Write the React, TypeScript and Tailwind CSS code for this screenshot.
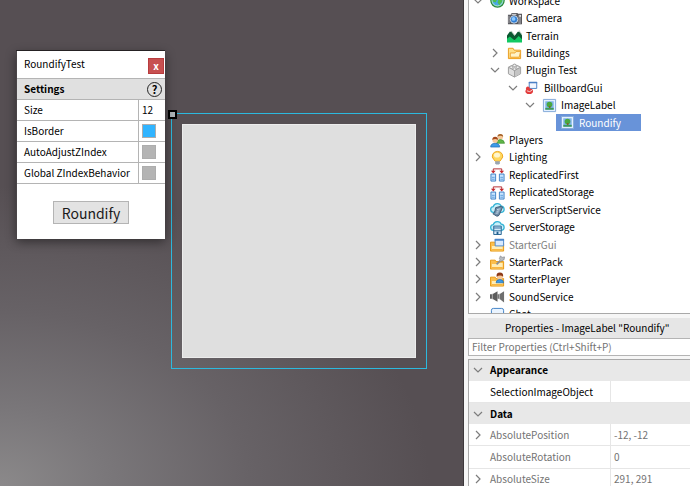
import type { ReactNode } from 'react'

type IconName =
  | 'workspace'
  | 'camera'
  | 'terrain'
  | 'folder'
  | 'model'
  | 'billboard'
  | 'image'
  | 'players'
  | 'lighting'
  | 'replicated'
  | 'serverScript'
  | 'serverStorage'
  | 'starterGui'
  | 'starterPack'
  | 'starterPlayer'
  | 'sound'
  | 'chat'

interface TreeItem {
  name: string
  icon: IconName
  level: number
  state?: 'open' | 'closed'
  dim?: boolean
  selected?: boolean
}

const tree: TreeItem[] = [
  { name: 'Workspace', icon: 'workspace', level: 0, state: 'open' },
  { name: 'Camera', icon: 'camera', level: 1 },
  { name: 'Terrain', icon: 'terrain', level: 1 },
  { name: 'Buildings', icon: 'folder', level: 1, state: 'closed' },
  { name: 'Plugin Test', icon: 'model', level: 1, state: 'open' },
  { name: 'BillboardGui', icon: 'billboard', level: 2, state: 'open' },
  { name: 'ImageLabel', icon: 'image', level: 3, state: 'open' },
  { name: 'Roundify', icon: 'image', level: 4, selected: true },
  { name: 'Players', icon: 'players', level: 0 },
  { name: 'Lighting', icon: 'lighting', level: 0, state: 'closed' },
  { name: 'ReplicatedFirst', icon: 'replicated', level: 0 },
  { name: 'ReplicatedStorage', icon: 'replicated', level: 0 },
  { name: 'ServerScriptService', icon: 'serverScript', level: 0 },
  { name: 'ServerStorage', icon: 'serverStorage', level: 0 },
  { name: 'StarterGui', icon: 'starterGui', level: 0, state: 'closed', dim: true },
  { name: 'StarterPack', icon: 'starterPack', level: 0, state: 'closed' },
  { name: 'StarterPlayer', icon: 'starterPlayer', level: 0, state: 'closed' },
  { name: 'SoundService', icon: 'sound', level: 0, state: 'closed' },
  { name: 'Chat', icon: 'chat', level: 0 },
]

const indent = ['pl-px', 'pl-[18px]', 'pl-9', 'pl-[53px]', 'pl-[71px]']

const folderShape = (
  <>
    <path d="M.5 5.500h5l1 1.500h8V15H.5z" fill="#fbbf4d" stroke="#e8980f" />
    <path d="M2 9.500h5l1-1h5.500V14H2z" fill="#ffedb5" />
    <path d="M2 13.500h11.500" stroke="#f7a823" />
  </>
)

const cloud = (
  <path
    d="M4 11a3 3 0 0 1-.5-6A4.5 4.5 0 0 1 12 4.500a3.300 3.300 0 0 1 .5 6.500z"
    fill="#c9f0fa"
    stroke="#35b4d6"
    strokeWidth="1.4"
  />
)

const icons: Record<IconName, ReactNode> = {
  workspace: (
    <>
      <circle cx="8" cy="8" r="7" fill="#4aa8e8" stroke="#2d8a3c" strokeWidth="1.5" />
      <circle cx="8" cy="8" r="5.800" fill="none" stroke="#b9efb9" />
      <path d="M3 5l4-2 1 3-2 4-3-1zM9 7l4-2v4l-3 4-2-3z" fill="#4fc04f" />
      <path d="M6 3l3-1 1 2-3 2z" fill="#d8f3ff" />
    </>
  ),
  camera: (
    <>
      <path d="M1 4h3l1-2h6l1 1h4v11H1z" fill="#55555a" />
      <path d="M12 4h3v10h-3z" fill="#85858a" />
      <path d="M1 5h2v8H1z" fill="#85858a" />
      <path d="M5 3h5v1.500H5z" fill="#c5c8cc" />
      <circle cx="7.500" cy="9" r="4" fill="#2f7fd6" stroke="#cfd6e0" />
      <circle cx="7" cy="8.500" r="2" fill="#8cc8ff" />
      <path d="M13 4.500h2V6h-2z" fill="#fff" />
    </>
  ),
  terrain: (
    <>
      <path d="M9 8l4-6 3 4v6H9zM2 4l3-1 4 5-4 2z" fill="#c3d3c9" />
      <path d="M0 8l2.500-3.500 2-.5L8 8.500l3.500-4.500 2 .5L16 8v5H0z" fill="#0a5730" />
      <path d="M0 11.500L3 9l5 4 4.500-4.500L16 12v3.500H0z" fill="#12c862" />
    </>
  ),
  folder: (
    <>
      <path d="M1.500 3.500h5l1 2h7v9h-13z" fill="#ffe08a" stroke="#e79a1e" />
      <path d="M3.500 8.500h5l1-1.500h5l-1.500 6H3.500z" fill="#fff3c9" stroke="#eba431" />
      <path d="M2 14h12" stroke="#f7a823" />
    </>
  ),
  model: (
    <>
      <path d="M8 1.500l6.500 3v7L8 15l-6.500-3.500v-7z" fill="#dedede" stroke="#9a9a9a" />
      <path d="M8 8l6-3.500v7L8 15z" fill="#c4c4c4" />
      <path d="M1.500 4.500L8 8v7M8 8l6.500-3.500" fill="none" stroke="#9f9f9f" />
      <ellipse cx="4.500" cy="4.500" rx="1.700" ry="1.300" fill="#f7f7f7" stroke="#8a8a8a" strokeWidth=".7" />
      <ellipse cx="8" cy="2.500" rx="1.700" ry="1.300" fill="#f7f7f7" stroke="#8a8a8a" strokeWidth=".7" />
      <ellipse cx="11.500" cy="4.500" rx="1.700" ry="1.300" fill="#f7f7f7" stroke="#8a8a8a" strokeWidth=".7" />
      <ellipse cx="8" cy="6.500" rx="1.700" ry="1.300" fill="#f7f7f7" stroke="#8a8a8a" strokeWidth=".7" />
    </>
  ),
  billboard: (
    <>
      <path d="M4.500 2.500h8v6.500h-8z" fill="#f1f6ff" stroke="#4a7fc4" />
      <path d="M4 2h9v1.500H4z" fill="#4a7fc4" />
      <ellipse cx="4.500" cy="12" rx="4" ry="3" fill="#e23b3b" />
      <circle cx="3" cy="9" r="2" fill="#e23b3b" />
      <path d="M2 11.500q3 2 5.500-.5" fill="none" stroke="#fff" strokeWidth=".8" />
    </>
  ),
  image: (
    <>
      <path d="M1.500 1.500h13v13h-13z" fill="#e3f0ff" stroke="#7fa6d8" />
      <path d="M3.500 3.500h9v9h-9z" fill="#7fb4e8" />
      <circle cx="8" cy="7" r="3" fill="#4aa83e" />
      <path d="M7.500 8.500H9v2.500H7.500z" fill="#8a5a2b" />
      <path d="M3.500 10.500h9v2h-9z" fill="#3f9a5a" />
    </>
  ),
  players: (
    <>
      <circle cx="11" cy="4" r="3" fill="#f8c898" />
      <path d="M8 4q0-3 3-3t3 3q-3-2-6 0z" fill="#a3622a" />
      <path d="M7 11q0-4 4-4t4.500 4z" fill="#5fb648" stroke="#3f8f30" strokeWidth=".7" />
      <circle cx="5.500" cy="7.500" r="3" fill="#f8c898" />
      <path d="M2.500 7.500q0-3.500 3-3.500t3 3.500q-3-2-6 0z" fill="#a3491c" />
      <path d="M.7 15q0-4 4.800-4t4.800 4z" fill="#3d9be8" stroke="#1b66ac" strokeWidth=".7" />
    </>
  ),
  lighting: (
    <>
      <path
        d="M8 1.500a5.500 5 0 0 1 4 8.500L10.500 12h-5L4 10A5.500 5 0 0 1 8 1.500z"
        fill="#ffd860"
        stroke="#eda31b"
      />
      <ellipse cx="7.500" cy="5.500" rx="3.200" ry="2.500" fill="#fff6cf" />
      <path d="M5.500 12h5v2l-1 1.500h-3l-1-1.500z" fill="#9aa5b2" />
    </>
  ),
  replicated: (
    <>
      <path d="M3.500 5V2h9v3" fill="none" stroke="#b3262c" />
      <path d="M1 4h5L3.500 7zM10 4h5l-2.500 3z" fill="#c3272d" />
      <path d="M1 7.500h5V15H1zM10 7.500h5V15h-5z" fill="#c9e5ff" stroke="#3c7fc4" />
      <path d="M2 11h3M11 11h3M2 13h3M11 13h3" stroke="#5b9ddc" />
    </>
  ),
  serverScript: (
    <>
      {cloud}
      <path d="M6 6l6-1.500q2 .5 1 2l-3 7q-1 2-3 1.500L3 12.500q2 0 3-6.500z" fill="#6b8aa6" stroke="#3d5a75" />
      <path d="M7.500 8l3.500-.7M7 10l3-.6M6 12l3-.5" stroke="#cfe0ee" />
    </>
  ),
  serverStorage: (
    <>
      {cloud}
      <path d="M4 6.500h8v9H4z" fill="#d3e8f8" stroke="#1f5f8f" />
      <path d="M4 8.500h8M4 11.500h8" stroke="#2b6c9c" />
      <path d="M7 12.500h2v3H7z" fill="#1f5f8f" />
    </>
  ),
  starterGui: (
    <>
      {folderShape}
      <path d="M5.500 2.500h9v7h-9z" fill="#d8eaff" stroke="#4a86cc" />
      <path d="M5 2h10v2H5z" fill="#4a86cc" />
    </>
  ),
  starterPack: (
    <>
      {folderShape}
      <path d="M7 10l4-4" stroke="#8c8f94" strokeWidth="2" />
      <path d="M10 4l1-3 2 1.500L15.500 2 15 5l-3 1.500z" fill="#b8bcc2" stroke="#808389" strokeWidth=".7" />
    </>
  ),
  starterPlayer: (
    <>
      {folderShape}
      <circle cx="10.500" cy="5" r="3.200" fill="#f8c898" />
      <path d="M7 5q-.5-4.500 3.500-4.500T14 5q-3-2.500-7 0z" fill="#8d3a18" />
      <path d="M6.500 11.500q0-3.500 4-3.500t4 3.500z" fill="#3d9be8" stroke="#1b66ac" strokeWidth=".7" />
    </>
  ),
  sound: (
    <>
      <path d="M0 5.500h2.500L8 2.500v11l-5.500-3H0z" fill="#5c5c5c" />
      <path d="M8 5.500h2L15 2.500v12l-5-4H8z" fill="#6f6f6f" />
      <path d="M2.500 5v6M10 5v6" stroke="#b5b5b5" />
    </>
  ),
  chat: <path d="M3.500 1.500h9q2 0 2 2v6q0 2-2 2H8L5 14v-2.500H3.500q-2 0-2-2v-6q0-2 2-2z" fill="#eaf4ff" stroke="#3c7fc4" />,
}

function Icon({ name }: { name: IconName }) {
  return (
    <svg viewBox="0 0 16 16" className="size-[15px] shrink-0" aria-hidden="true">
      {icons[name]}
    </svg>
  )
}

function Chevron({ state }: { state: 'open' | 'closed' }) {
  return (
    <svg viewBox="0 0 10 10" className="size-2.5" fill="none" stroke="#7d7d7d" strokeWidth="1.2" aria-hidden="true">
      <path d={state === 'open' ? 'M1 3l4 4 4-4' : 'M3 1l4 4-4 4'} />
    </svg>
  )
}

function TreeRow({ item }: { item: TreeItem }) {
  return (
    <li className={`flex min-h-0 items-center ${indent[item.level]}`}>
      {item.state ? (
        <button
          type="button"
          aria-label={`Toggle ${item.name}`}
          className="flex w-4 shrink-0 justify-center"
        >
          <Chevron state={item.state} />
        </button>
      ) : (
        <span className="w-4 shrink-0" />
      )}
      <span
        className={`flex h-full items-center gap-1 pl-1 whitespace-nowrap ${
          item.selected ? 'bg-[#6893d9] pr-5 text-white' : ''
        } ${item.dim ? 'text-[#808080]' : ''}`}
      >
        <Icon name={item.icon} />
        {item.name}
      </span>
    </li>
  )
}

function Explorer() {
  return (
    <section aria-label="Explorer" className="h-[314px] shrink-0 overflow-hidden border-b border-l border-[#a9a9a9] bg-white">
      <ul className="-mt-2 grid h-[331px] auto-rows-fr">
        {tree.map((item) => (
          <TreeRow key={item.name} item={item} />
        ))}
      </ul>
    </section>
  )
}

function GroupRow({ name }: { name: string }) {
  return (
    <tr className="bg-[#e8e8e8]">
      <th colSpan={2} scope="colgroup" className="p-0 text-left font-bold">
        <span className="flex items-center">
          <button type="button" aria-label={`Toggle ${name}`} className="flex w-[21px] justify-center pr-1">
            <Chevron state="open" />
          </button>
          {name}
        </span>
      </th>
    </tr>
  )
}

interface PropertyRowProps {
  name: string
  value?: string
  expandable?: boolean
  readOnly?: boolean
}

function PropertyRow({ name, value, expandable, readOnly }: PropertyRowProps) {
  return (
    <tr className={readOnly ? 'text-[#737373]' : ''}>
      <th scope="row" className="border-r border-b border-[#e6e6e6] p-0 text-left font-normal">
        <span className="flex items-center">
          <span className="flex w-[21px] justify-center pr-1">
            {expandable && <Chevron state="closed" />}
          </span>
          {name}
        </span>
      </th>
      <td className="border-b border-[#e6e6e6] p-0 pl-[3px]">{value}</td>
    </tr>
  )
}

function Properties() {
  return (
    <section aria-label="Properties" className="flex min-h-0 flex-1 flex-col overflow-hidden">
      <h2 className="mt-1 h-5 shrink-0 bg-[#e6e6e6] pl-[37px] leading-5 whitespace-nowrap">
        Properties - ImageLabel "Roundify"
      </h2>
      <input
        type="text"
        aria-label="Filter properties"
        placeholder="Filter Properties (Ctrl+Shift+P)"
        className="h-[18px] w-full shrink-0 border border-r-0 border-[#b4b4b4] bg-white pb-0.5 pl-[3px] outline-none placeholder:text-[#737373]"
      />
      <div className="mt-[3px] shrink-0 border-t border-l border-[#a9a9a9] bg-white">
        <table className="h-[131px] w-full table-fixed border-separate border-spacing-0">
          <colgroup>
            <col className="w-[142px]" />
            <col />
          </colgroup>
          <tbody>
            <GroupRow name="Appearance" />
            <PropertyRow name="SelectionImageObject" />
            <GroupRow name="Data" />
            <PropertyRow name="AbsolutePosition" value="-12, -12" expandable readOnly />
            <PropertyRow name="AbsoluteRotation" value="0" readOnly />
            <PropertyRow name="AbsoluteSize" value="291, 291" expandable readOnly />
          </tbody>
        </table>
      </div>
    </section>
  )
}

function SettingToggle({ id, label, checked }: { id: string; label: string; checked?: boolean }) {
  return (
    <div className="flex h-[21px] border-b border-[#b4b4b4]">
      <label htmlFor={id} className="flex-1 pl-[7px] leading-5 whitespace-nowrap">
        {label}
      </label>
      <div className="flex w-[27px] shrink-0 items-center border-l border-[#b4b4b4] pl-[3px]">
        <input
          id={id}
          type="checkbox"
          defaultChecked={checked}
          className="size-3.5 appearance-none border border-[#adadad] bg-[#b4b4b4] checked:bg-[#30b4ff]"
        />
      </div>
    </div>
  )
}

function PluginWindow() {
  return (
    <section
      aria-label="RoundifyTest"
      className="absolute top-[51px] left-4 h-[188px] w-[149px] border-l border-[#4a4548] bg-white shadow-[0_3px_10px_rgba(0,0,0,0.45),0_-1px_0_#2a2628]"
    >
      <header className="flex h-7 items-center justify-between border-b border-[#b4b4b4] pr-px pl-[7px]">
        <h1 className="pb-0.5">RoundifyTest</h1>
        <button
          type="button"
          aria-label="Close"
          className="mt-0.5 size-4 border border-[#b83c3e] bg-[#c75050] leading-3 font-bold text-white"
        >
          x
        </button>
      </header>
      <div className="flex h-[21px] items-center justify-between border-b border-[#b4b4b4] bg-[#e0e0e0] pr-[3px] pl-[7px]">
        <h2 className="leading-5 font-bold">Settings</h2>
        <button
          type="button"
          aria-label="Help"
          className="size-[15px] rounded-full border border-[#222] text-[11px] leading-3 font-bold"
        >
          ?
        </button>
      </div>
      <div className="flex h-[21px] border-b border-[#b4b4b4]">
        <label htmlFor="size" className="flex-1 pl-[7px] leading-5">
          Size
        </label>
        <input
          id="size"
          type="text"
          defaultValue="12"
          className="w-[27px] border-l border-[#b4b4b4] pl-[3px] outline-none"
        />
      </div>
      <SettingToggle id="is-border" label="IsBorder" checked />
      <SettingToggle id="auto-z" label="AutoAdjustZIndex" />
      <SettingToggle id="global-z" label="Global ZIndexBehavior" />
      <div className="flex justify-center pt-[17px]">
        <button
          type="button"
          className="h-[23px] w-[76px] border border-[#b4b4b4] bg-[#e3e3e3] text-sm leading-5 text-[#1a1a1a]"
        >
          Roundify
        </button>
      </div>
    </section>
  )
}

function Viewport() {
  return (
    <main className="relative min-w-0 flex-1 overflow-hidden border-r border-[#3d383b] bg-[#564f53] bg-[radial-gradient(ellipse_430px_300px_at_0%_100%,#8b898a_0%,#7a777a_25%,#676266_58%,#564f53_100%)]">
      {/* selected gui object */}
      <div className="absolute top-[113px] left-[171px] size-64 border border-[#2cb9de] p-2.5">
        <div className="size-[234px] border border-[#ececec] bg-[#dfdfdf]" />
        <span className="absolute -top-1 -left-1 size-[9px] border-2 border-black bg-[#aeb4b8]" />
      </div>
      <PluginWindow />
    </main>
  )
}

export default function App() {
  return (
    <div className="flex h-screen overflow-hidden bg-white font-['Noto_Sans_CJK_SC','Noto_Sans',sans-serif] text-[10px] leading-4 text-black">
      <Viewport />
      <aside className="flex w-[226px] shrink-0 flex-col bg-[#f6f6f6] pl-1">
        <Explorer />
        <Properties />
      </aside>
    </div>
  )
}
